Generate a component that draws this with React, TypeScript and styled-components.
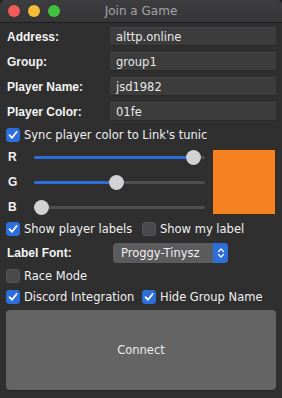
import styled, { createGlobalStyle } from "styled-components";

const Global = createGlobalStyle`
  html, body {
    margin: 0;
    padding: 0;
    background: #1e1e1e;
  }
  body {
    font-family: "DejaVu Sans", "Liberation Sans", sans-serif;
  }
`;

const Window = styled.div`
  width: 282px;
  height: 398px;
  background: #2f2f30;
  border-radius: 5px 5px 0 0;
  overflow: hidden;
  display: flex;
  flex-direction: column;
  box-sizing: border-box;
  color: #f2f2f2;
`;

const TitleBar = styled.div`
  height: 22px;
  flex: none;
  display: flex;
  align-items: center;
  position: relative;
  background: linear-gradient(#3d3d3f, #363638);
  border-bottom: 1px solid #1f1f1f;
`;

const Lights = styled.div`
  display: flex;
  gap: 8px;
  padding-left: 8px;
`;

const Light = styled.span<{ $c: string }>`
  width: 12px;
  height: 12px;
  border-radius: 50%;
  background: ${(p) => p.$c};
`;

const Title = styled.div`
  position: absolute;
  left: 0;
  right: 0;
  text-align: center;
  font-size: 12px;
  color: #a4a4a6;
  pointer-events: none;
`;

const Body = styled.div`
  flex: 1;
  display: flex;
  flex-direction: column;
  padding: 4px 6px 8px 6px;
  gap: 6px;
`;

const FieldRow = styled.div`
  display: grid;
  grid-template-columns: 104px 1fr;
  height: 19px;
  align-items: center;
`;

const Label = styled.span`
  font-family: "Liberation Sans", Arial, sans-serif;
  font-size: 12px;
  font-weight: bold;
  color: #f4f4f4;
  padding-left: 1px;
  white-space: nowrap;
`;

const Input = styled.div`
  height: 19px;
  box-sizing: border-box;
  background: #3c3c3d;
  border-top: 1px solid #454547;
  border-bottom: 1px solid #2a2a2a;
  font-size: 11.5px;
  padding-left: 6px;
  display: flex;
  align-items: center;
  color: #e8e8e8;
`;

const CheckRow = styled.div<{ $h?: number }>`
  display: flex;
  align-items: center;
  height: ${(p) => p.$h ?? 16}px;
`;

const CheckItem = styled.label<{ $w?: number }>`
  display: flex;
  align-items: center;
  gap: 4px;
  font-size: 11.5px;
  color: #efefef;
  white-space: nowrap;
  width: ${(p) => (p.$w ? `${p.$w}px` : "auto")};
`;

const Box = styled.span<{ $on: boolean }>`
  width: 14px;
  height: 14px;
  border-radius: 3px;
  box-sizing: border-box;
  background: ${(p) => (p.$on ? "#2c6fdb" : "#4a4a4c")};
  border: 1px solid ${(p) => (p.$on ? "#2c6fdb" : "#555557")};
  display: flex;
  align-items: center;
  justify-content: center;
`;

const ColorBlock = styled.div`
  display: flex;
  gap: 6px;
  height: 66px;
`;

const Sliders = styled.div`
  flex: 1;
  display: flex;
  flex-direction: column;
  justify-content: space-between;
`;

const SliderRow = styled.div`
  display: flex;
  align-items: center;
  height: 16px;
`;

const SliderLabel = styled.span`
  width: 26px;
  font-family: "Liberation Sans", Arial, sans-serif;
  font-size: 12px;
  font-weight: bold;
  padding-left: 2px;
`;

const Track = styled.div`
  flex: 1;
  height: 3px;
  border-radius: 2px;
  background: #4f4f51;
  position: relative;
  margin-right: 1px;
`;

const Fill = styled.div`
  height: 100%;
  border-radius: 2px;
  background: #2c6fdb;
`;

const Thumb = styled.div`
  position: absolute;
  top: 50%;
  width: 15px;
  height: 15px;
  margin-left: -7px;
  margin-top: -7.5px;
  border-radius: 50%;
  background: #d2d2d4;
  box-shadow: 0 0 1px rgba(0, 0, 0, 0.6);
`;

const Swatch = styled.div<{ $c: string }>`
  width: 64px;
  background: ${(p) => p.$c};
  border: 1px solid #3a2a1a;
  box-sizing: border-box;
`;

const Popup = styled.div`
  width: 115px;
  height: 20px;
  margin-left: 3px;
  border-radius: 4px;
  background: #5c5c5e;
  display: flex;
  align-items: center;
  overflow: hidden;
  font-size: 11.5px;
  color: #f0f0f0;
`;

const PopupText = styled.span`
  flex: 1;
  padding-left: 8px;
`;

const PopupArrows = styled.span`
  width: 15px;
  height: 100%;
  background: #2c6fdb;
  display: flex;
  align-items: center;
  justify-content: center;
`;

const ConnectButton = styled.button`
  flex: 1;
  border: none;
  border-radius: 4px;
  background: #646465;
  color: #ececec;
  font-family: inherit;
  font-size: 11.5px;
  box-shadow: 0 1px 0 #252525;
`;

const Check = () => (
  <svg width="10" height="10" viewBox="0 0 10 10">
    <path d="M1.5 5.2 L4 7.8 L8.6 2" stroke="#fff" strokeWidth="1.8" fill="none" strokeLinecap="round" strokeLinejoin="round" />
  </svg>
);

const Checkbox = ({ on, text, w }: { on: boolean; text: string; w?: number }) => (
  <CheckItem $w={w}>
    <Box $on={on}>{on && <Check />}</Box>
    {text}
  </CheckItem>
);

const Slider = ({ name, value }: { name: string; value: number }) => (
  <SliderRow>
    <SliderLabel>{name}</SliderLabel>
    <Track>
      <Fill style={{ width: `${value * 100}%` }} />
      <Thumb style={{ left: `${value * 100}%` }} />
    </Track>
  </SliderRow>
);

const fields = [
  ["Address:", "alttp.online"],
  ["Group:", "group1"],
  ["Player Name:", "jsd1982"],
  ["Player Color:", "01fe"],
];

export default function App() {
  return (
    <>
      <Global />
      <Window>
        <TitleBar>
          <Lights>
            <Light $c="#f25b57" />
            <Light $c="#f3bd3a" />
            <Light $c="#3fc33f" />
          </Lights>
          <Title>Join a Game</Title>
        </TitleBar>
        <Body>
          {fields.map(([label, value]) => (
            <FieldRow key={label}>
              <Label>{label}</Label>
              <Input>{value}</Input>
            </FieldRow>
          ))}
          <CheckRow>
            <Checkbox on text="Sync player color to Link's tunic" />
          </CheckRow>
          <ColorBlock>
            <Sliders>
              <Slider name="R" value={0.93} />
              <Slider name="G" value={0.48} />
              <Slider name="B" value={0.04} />
            </Sliders>
            <Swatch $c="#f58220" />
          </ColorBlock>
          <CheckRow>
            <Checkbox on text="Show player labels" w={136} />
            <Checkbox on={false} text="Show my label" />
          </CheckRow>
          <FieldRow>
            <Label>Label Font:</Label>
            <Popup>
              <PopupText>Proggy-Tinysz</PopupText>
              <PopupArrows>
                <svg width="8" height="12" viewBox="0 0 8 12">
                  <path d="M1.5 4.5 L4 2 L6.5 4.5 M1.5 7.5 L4 10 L6.5 7.5" stroke="#fff" strokeWidth="1.3" fill="none" strokeLinecap="round" strokeLinejoin="round" />
                </svg>
              </PopupArrows>
            </Popup>
          </FieldRow>
          <CheckRow $h={16}>
            <Checkbox on={false} text="Race Mode" />
          </CheckRow>
          <CheckRow $h={14}>
            <Checkbox on text="Discord Integration" w={136} />
            <Checkbox on text="Hide Group Name" />
          </CheckRow>
          <ConnectButton>Connect</ConnectButton>
        </Body>
      </Window>
    </>
  );
}
